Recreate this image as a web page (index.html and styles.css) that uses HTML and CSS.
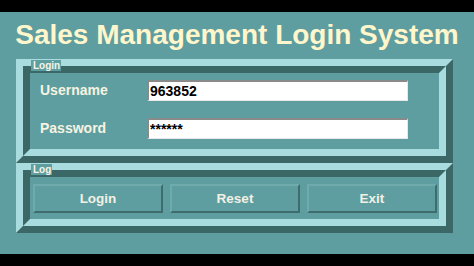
FILE: index.html
```html
<!DOCTYPE html>
<html>
<head>
<meta charset="utf-8">
<link rel="stylesheet" href="styles.css">
</head>
<body>
<div class="screen">
  <h1 class="title">Sales Management Login System</h1>
  <div class="frame frame-login">
    <span class="legend">Login</span>
    <div class="frame-in login-body">
      <div class="row">
        <label class="label">Username</label>
        <input class="field" type="text" value="963852" readonly>
      </div>
      <div class="row">
        <label class="label">Password</label>
        <input class="field" type="text" value="******" readonly>
      </div>
    </div>
  </div>
  <div class="frame frame-log">
    <span class="legend">Log</span>
    <div class="frame-in buttons">
      <button class="btn">Login</button>
      <button class="btn">Reset</button>
      <button class="btn">Exit</button>
    </div>
  </div>
</div>
</body>
</html>
```
FILE: styles.css
```css
html, body {
  margin: 0;
  padding: 0;
  background: #000;
  width: 474px;
  height: 266px;
  overflow: hidden;
  font-family: "Liberation Sans", Arial, sans-serif;
}
.screen {
  margin-top: 12px;
  height: 242px;
  background: #5f9ea0;
  display: flex;
  flex-direction: column;
}
.title {
  margin: 0;
  padding-top: 6px;
  height: 34px;
  line-height: 34px;
  font-size: 28px;
  font-weight: bold;
  text-align: center;
  color: #fff6cc;
}
.frame {
  position: relative;
  margin-left: 16px;
  width: 437px;
  box-sizing: border-box;
  border: 7px solid;
  border-color: #a8dcdf #3c6767 #3c6767 #a8dcdf;
}
.frame-login {
  margin-top: 7px;
  height: 104px;
}
.frame-log {
  height: 70px;
}
.frame-in {
  box-sizing: border-box;
  height: 100%;
  border: 7px solid;
  border-color: #3c6767 #a8dcdf #a8dcdf #3c6767;
}
.legend {
  position: absolute;
  left: 8px;
  top: -6px;
  padding: 0 1px 0 2px;
  height: 11px;
  line-height: 11px;
  font-size: 10px;
  font-weight: bold;
  color: #f6f4e6;
  background: #5f9ea0;
}
.login-body {
  display: flex;
  flex-direction: column;
  gap: 17px;
  padding: 7px 0 0 10px;
}
.row {
  display: flex;
  align-items: center;
  height: 21px;
}
.label {
  width: 107px;
  font-size: 14px;
  line-height: 21px;
  font-weight: bold;
  color: #f6f3e0;
}
.field {
  box-sizing: border-box;
  width: 261px;
  height: 21px;
  margin: 0;
  padding: 0 0 0 1px;
  border-style: solid;
  border-width: 2px 1px 1px 2px;
  border-color: #8a8a8a #e8e8e8 #e8e8e8 #8a8a8a;
  background: #fff;
  font-family: "Liberation Sans", Arial, sans-serif;
  font-size: 14px;
  font-weight: bold;
  color: #000;
  outline: none;
}
.buttons {
  display: grid;
  grid-template-columns: 1fr 1fr 1fr;
  gap: 7px;
  padding: 7px 2px 6px 3px;
}
.btn {
  box-sizing: border-box;
  height: 29px;
  margin: 0;
  padding: 0;
  border: 2px solid;
  border-color: #6fabad #3f6d6e #3f6d6e #6fabad;
  background: #5f9ea0;
  font-family: "Liberation Sans", Arial, sans-serif;
  font-size: 13.5px;
  font-weight: bold;
  color: #f2f0e4;
}
```
